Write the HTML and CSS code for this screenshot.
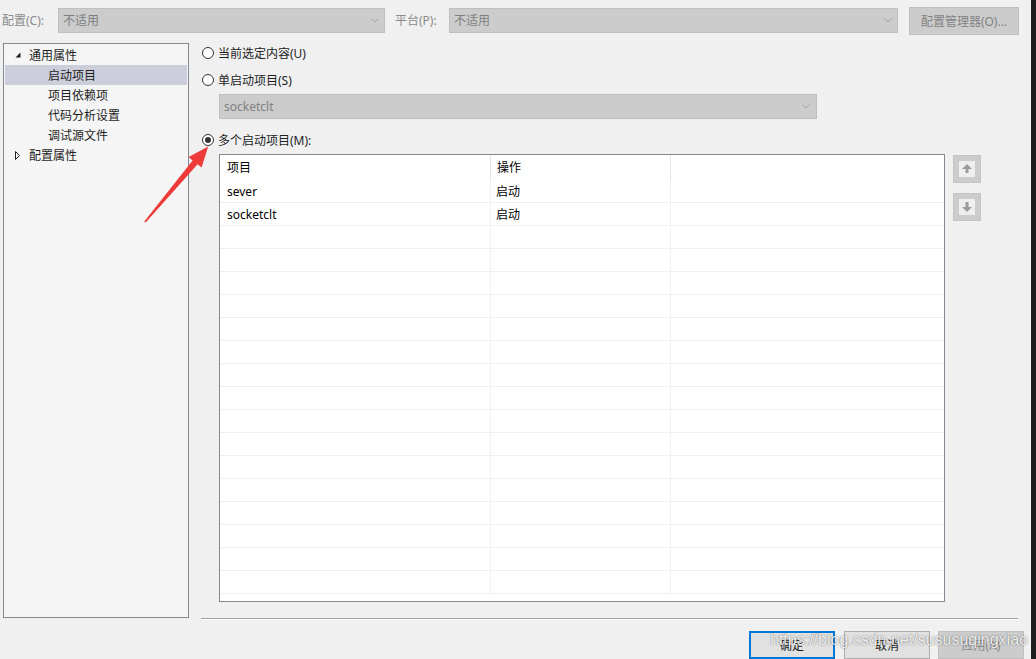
FILE: index.html
```html
<!DOCTYPE html>
<html>
<head>
    <meta charset="UTF-8">
    <title>属性页</title>
    <link rel="stylesheet" href="styles.css">
</head>
<body>
    <div class="window">
        <div class="dialog">
            <!--顶部配置栏-->
            <div class="topbar">
                <span class="lbl lbl-config">配置(C):</span>
                <div class="combo combo-config">
                    <span>不适用</span>
                    <svg class="chev" width="8" height="5" viewBox="0 0 8 5"><path d="M0.5 0.5 L4 4 L7.5 0.5" fill="none" stroke="#a3a3a3" stroke-width="1"/></svg>
                </div>
                <span class="lbl lbl-platform">平台(P):</span>
                <div class="combo combo-platform">
                    <span>不适用</span>
                    <svg class="chev" width="8" height="5" viewBox="0 0 8 5"><path d="M0.5 0.5 L4 4 L7.5 0.5" fill="none" stroke="#a3a3a3" stroke-width="1"/></svg>
                </div>
                <div class="btn btn-manager">配置管理器(O)...</div>
            </div>

            <div class="main">
                <!--左侧树-->
                <div class="tree">
                    <div class="node node-l1">
                        <span class="twisty"><svg width="6" height="6" viewBox="0 0 6 6"><path d="M5.5 0.5 L5.5 5.5 L0.5 5.5 Z" fill="#1e1e1e"/></svg></span>通用属性
                    </div>
                    <div class="node node-l2 selected">启动项目</div>
                    <div class="node node-l2">项目依赖项</div>
                    <div class="node node-l2">代码分析设置</div>
                    <div class="node node-l2">调试源文件</div>
                    <div class="node node-l1">
                        <span class="twisty"><svg width="6" height="9" viewBox="0 0 6 9"><path d="M0.5 0.5 L4.5 4.5 L0.5 8.5 Z" fill="none" stroke="#1e1e1e" stroke-width="1"/></svg></span>配置属性
                    </div>
                </div>

                <!--右侧内容-->
                <div class="pane">
                    <div class="radio"><span class="circle"></span>当前选定内容(U)</div>
                    <div class="radio radio-single"><span class="circle"></span>单启动项目(S)</div>
                    <div class="combo combo-project">
                        <span>socketclt</span>
                        <svg class="chev" width="8" height="5" viewBox="0 0 8 5"><path d="M0.5 0.5 L4 4 L7.5 0.5" fill="none" stroke="#a3a3a3" stroke-width="1"/></svg>
                    </div>
                    <div class="radio radio-multi checked"><span class="circle"></span>多个启动项目(M):</div>

                    <div class="grid-wrap">
                        <div class="table">
                            <div class="row row-head"><div class="cell">项目</div><div class="cell">操作</div><div class="cell"></div></div>
                            <div class="row"><div class="cell">sever</div><div class="cell">启动</div><div class="cell"></div></div>
                            <div class="row"><div class="cell">socketclt</div><div class="cell">启动</div><div class="cell"></div></div>
                            <div class="row empty"><div class="cell"></div><div class="cell"></div><div class="cell"></div></div>
                            <div class="row empty"><div class="cell"></div><div class="cell"></div><div class="cell"></div></div>
                            <div class="row empty"><div class="cell"></div><div class="cell"></div><div class="cell"></div></div>
                            <div class="row empty"><div class="cell"></div><div class="cell"></div><div class="cell"></div></div>
                            <div class="row empty"><div class="cell"></div><div class="cell"></div><div class="cell"></div></div>
                            <div class="row empty"><div class="cell"></div><div class="cell"></div><div class="cell"></div></div>
                            <div class="row empty"><div class="cell"></div><div class="cell"></div><div class="cell"></div></div>
                            <div class="row empty"><div class="cell"></div><div class="cell"></div><div class="cell"></div></div>
                            <div class="row empty"><div class="cell"></div><div class="cell"></div><div class="cell"></div></div>
                            <div class="row empty"><div class="cell"></div><div class="cell"></div><div class="cell"></div></div>
                            <div class="row empty"><div class="cell"></div><div class="cell"></div><div class="cell"></div></div>
                            <div class="row empty"><div class="cell"></div><div class="cell"></div><div class="cell"></div></div>
                            <div class="row empty"><div class="cell"></div><div class="cell"></div><div class="cell"></div></div>
                            <div class="row empty"><div class="cell"></div><div class="cell"></div><div class="cell"></div></div>
                            <div class="row empty"><div class="cell"></div><div class="cell"></div><div class="cell"></div></div>
                            <div class="row empty"><div class="cell"></div><div class="cell"></div><div class="cell"></div></div>
                        </div>
                        <div class="movers">
                            <div class="mover">
                                <span class="mover-face"><svg width="16" height="16" viewBox="0 0 16 16"><path d="M8 3 L3 8 L13 8 Z" fill="#9c9c9c"/><rect x="6.5" y="8" width="3" height="4" fill="#9c9c9c"/></svg></span>
                            </div>
                            <div class="mover">
                                <span class="mover-face"><svg width="16" height="16" viewBox="0 0 16 16"><rect x="6.5" y="3" width="3" height="5" fill="#9c9c9c"/><path d="M3 8 L13 8 L8 13 Z" fill="#9c9c9c"/></svg></span>
                            </div>
                        </div>
                    </div>
                    <div class="sep"></div>
                </div>
            </div>

            <!--底部按钮-->
            <div class="footer">
                <div class="btn btn-ok">确定</div>
                <div class="btn btn-cancel">取消</div>
                <div class="btn btn-apply">应用(A)</div>
            </div>

            <div class="watermark">https://blog.csdn.net/sususuqingxiao</div>
        </div>
        <div class="edge"></div>

        <!--红色标注箭头-->
        <svg class="arrow" width="1036" height="659" viewBox="0 0 1036 659">
            <path d="M144.3 221.6 L192.6 160.6 L188.6 157 L208.2 146.6 L201.6 167.6 L197.6 164.2 L145.7 222.6 Z" fill="#ef3a3a"/>
        </svg>
    </div>
</body>
</html>
```

FILE: styles.css
```css
* {
    margin: 0;
    padding: 0;
    box-sizing: border-box;
}
body {
    font-size: 12px;
    font-family: "Noto Sans", "Noto Sans CJK SC", sans-serif;
    color: #1e1e1e;
    background-color: #f0f0f0;
    overflow: hidden;
}
.window {
    position: relative;
    display: flex;
    width: 1036px;
    height: 659px;
}
.dialog {
    position: relative;
    width: 1031px;
    height: 659px;
    background-color: #f0f0f0;
    overflow: hidden;
}
.edge {
    width: 5px;
    height: 659px;
    background-color: #1f1f1f;
}

/* 顶部栏 */
.topbar {
    display: flex;
    align-items: flex-start;
    height: 43px;
    padding-top: 8px;
}
.lbl {
    line-height: 25px;
    color: #8a8a8a;
}
.lbl-config {
    width: 58px;
    padding-left: 2px;
}
.lbl-platform {
    width: 54px;
    margin-left: 10px;
}
.combo {
    display: flex;
    align-items: center;
    justify-content: space-between;
    height: 25px;
    padding: 0 5px 0 4px;
    background-color: #cccccc;
    border: 1px solid #bfbfbf;
    color: #7e7e7e;
    line-height: 23px;
}
.combo-config {
    width: 327px;
}
.combo-platform {
    width: 449px;
}
.btn {
    display: flex;
    align-items: center;
    justify-content: center;
    width: 86px;
    height: 28px;
    background-color: #e1e1e1;
    border: 1px solid #adadad;
}
.btn-manager {
    width: 110px;
    margin-top: -1px;
    margin-left: 11px;
    background-color: #cccccc;
    border-color: #bfbfbf;
    color: #838383;
}

/* 主区域 */
.main {
    display: flex;
    height: 577px;
}
.tree {
    width: 186px;
    height: 575px;
    margin-left: 3px;
    padding-top: 1px;
    background-color: #f5f5f5;
    border: 1px solid #828790;
}
.node {
    display: flex;
    align-items: center;
    height: 20px;
}
.node-l1 {
    padding-left: 11px;
}
.node-l2 {
    padding-left: 44px;
}
.node.selected {
    margin: 0 1px;
    padding-left: 43px;
    background-color: #cccedb;
}
.twisty {
    display: flex;
    align-items: center;
    width: 14px;
    height: 20px;
}
.pane {
    width: 817px;
    margin-left: 12px;
}
.radio {
    display: flex;
    align-items: center;
    height: 20px;
}
.radio-single {
    margin-top: 7px;
}
.radio-multi {
    margin-top: 11px;
}
.circle {
    position: relative;
    width: 12px;
    height: 12px;
    margin: 0 4px 0 1px;
    border: 1px solid #333333;
    border-radius: 50%;
    background-color: #ffffff;
}
.checked .circle:after {
    content: "";
    position: absolute;
    left: 2px;
    top: 2px;
    width: 6px;
    height: 6px;
    border-radius: 50%;
    background-color: #333333;
}
.combo-project {
    width: 598px;
    margin: 4px 0 0 18px;
    color: #808080;
}
.combo-project .chev {
    margin-right: 1px;
}

/* 启动项目表格 */
.grid-wrap {
    display: flex;
    align-items: flex-start;
    margin: 4px 0 0 18px;
}
.table {
    width: 726px;
    height: 448px;
    background-color: #ffffff;
    border: 1px solid #828790;
    overflow: hidden;
}
.row {
    display: grid;
    grid-template-columns: 271px 180px 1fr;
    height: 23px;
    border-bottom: 1px solid #f0f0f0;
    color: #000000;
}
.row-head {
    height: 25px;
    border-bottom: none;
}
.cell {
    padding-top: 1px;
    padding-left: 7px;
    line-height: 22px;
    border-right: 1px solid #eef2f8;
    white-space: nowrap;
}
.cell:nth-child(2) {
    padding-left: 5px;
}
.cell:last-child {
    border-right: none;
}
.row-head .cell {
    padding-top: 0;
    line-height: 25px;
    border-right-color: #e5e5e5;
}
.row-head .cell:nth-child(2) {
    padding-left: 6px;
}
.movers {
    margin-left: 8px;
    margin-top: 1px;
}
.mover {
    width: 28px;
    height: 28px;
    margin-bottom: 10px;
    padding: 5px;
    background-color: #cccccc;
    border: 1px solid #c4c4c4;
}
.mover-face {
    display: block;
    width: 16px;
    height: 16px;
    background-color: #efefef;
}
.mover-face svg {
    display: block;
}
.sep {
    height: 2px;
    margin-top: 16px;
    border-top: 1px solid #a0a0a0;
    border-bottom: 1px solid #ffffff;
}

/* 底部 */
.footer {
    display: flex;
    justify-content: flex-end;
    padding: 11px 7px 0 0;
}
.btn-ok {
    border: 2px solid #0078d7;
}
.btn-cancel {
    margin-left: 9px;
}
.btn-apply {
    margin-left: 8px;
    background-color: #cccccc;
    border-color: #bfbfbf;
    color: #8a8a8a;
}
.watermark {
    position: absolute;
    left: 770px;
    top: 632px;
    font-family: "Liberation Sans", Arial, sans-serif;
    font-size: 16px;
    line-height: 16px;
    color: rgba(255, 255, 255, 0.9);
    text-shadow: 0 0 1px rgba(0, 0, 0, 0.45), 0 0 2px rgba(0, 0, 0, 0.25);
    white-space: nowrap;
}
.arrow {
    position: absolute;
    left: 0;
    top: 0;
    pointer-events: none;
}
```
